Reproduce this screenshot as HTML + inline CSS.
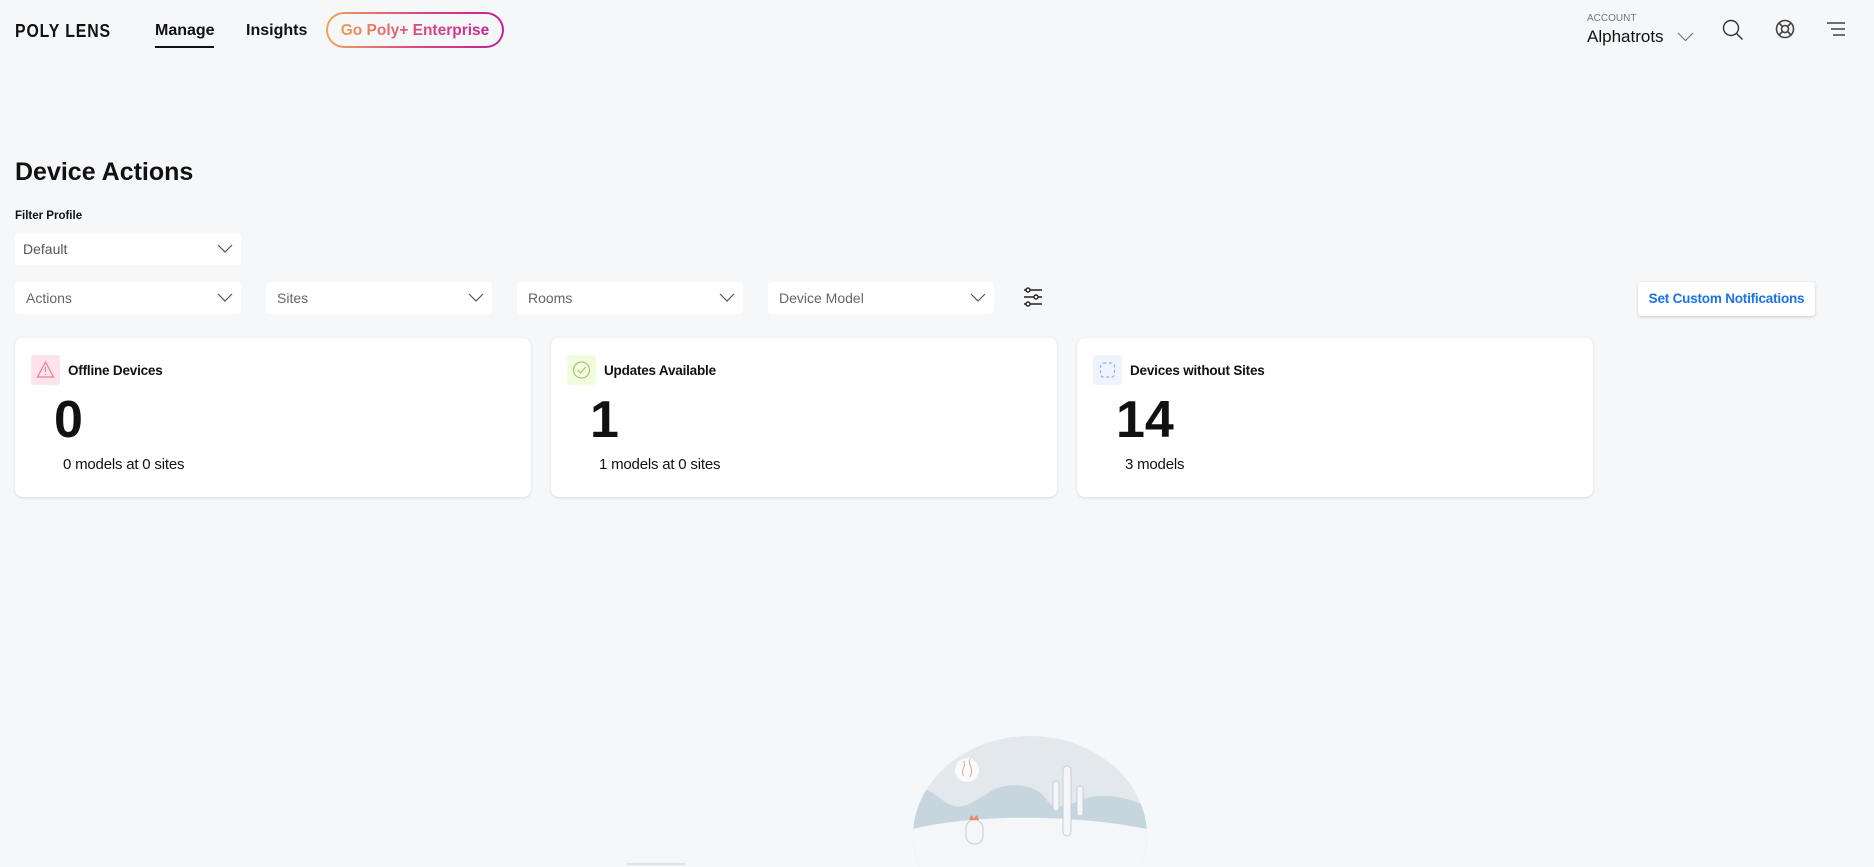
<!DOCTYPE html>
<html><head><meta charset="utf-8"><style>
*{box-sizing:border-box;margin:0;padding:0}
body{width:1874px;height:867px;background:#f6f7f9;font-family:"Liberation Sans",sans-serif;color:#111;position:relative;overflow:hidden}
.a{position:absolute}
.logo{left:15px;top:21px;font-size:18px;letter-spacing:1px;font-weight:bold;color:#111;transform:scaleX(.88);transform-origin:left}
.nav{top:22px;font-size:16px;font-weight:bold}
.btn{left:326px;top:12px;width:178px;height:36px;border-radius:18px;border:2px solid transparent;background:linear-gradient(#f6f7f9,#f6f7f9) padding-box,linear-gradient(90deg,#f3a45a,#d94b7c,#c2209a) border-box;text-align:center;line-height:33px;font-size:15.5px;font-weight:bold}
.btn span{background:linear-gradient(90deg,#ef9a55,#d9507a,#c4259a);-webkit-background-clip:text;color:transparent}
.sel{background:#fff;border-radius:4px;height:32px;width:226px;font-size:14px;color:#666;padding-left:11px;line-height:32px}
.sel svg{position:absolute;right:8px;top:11px}
.card{background:#fff;border-radius:8px;top:338px;height:159px;box-shadow:0 1px 3px rgba(0,0,0,.12)}
.ic{position:absolute;left:16px;top:17px;width:29px;height:30px;border-radius:3px}
.ct{position:absolute;left:53px;top:25px;font-size:13.5px;font-weight:bold;letter-spacing:-.2px}
.num{position:absolute;left:39px;top:52px;font-size:52px;font-weight:bold}
.sub{position:absolute;left:48px;top:118px;font-size:15px;letter-spacing:-.2px}
</style></head><body>
<div class="a logo">POLY LENS</div>
<div class="a nav" style="left:155px">Manage</div>
<div class="a" style="left:155px;top:46px;width:59px;height:2px;background:#111"></div>
<div class="a nav" style="left:246px">Insights</div>
<div class="a btn"><span>Go Poly+ Enterprise</span></div>
<div class="a" style="left:1587px;top:13px;font-size:10px;color:#777">ACCOUNT</div>
<div class="a" style="left:1587px;top:27px;font-size:17px">Alphatrots</div>
<svg class="a" style="left:1677px;top:32px" width="17" height="10"><path d="M1 1l7.5 7.5L16 1" fill="none" stroke="#777" stroke-width="1.2"/></svg>
<svg class="a" style="left:1722px;top:19px" width="22" height="22"><circle cx="9" cy="9" r="7.5" fill="none" stroke="#333" stroke-width="1.4"/><path d="M14.5 14.5l6 6" stroke="#333" stroke-width="1.4"/></svg>
<svg class="a" style="left:1775px;top:19px" width="20" height="20"><circle cx="10" cy="10" r="8.5" fill="none" stroke="#444" stroke-width="1.6"/><circle cx="10" cy="10" r="3.5" fill="none" stroke="#444" stroke-width="1.6"/><path d="M4 4l3.5 3.5M16 4l-3.5 3.5M4 16l3.5-3.5M16 16l-3.5-3.5" stroke="#444" stroke-width="1.6"/></svg>
<svg class="a" style="left:1827px;top:22px" width="20" height="14"><path d="M0 1h18M4 7h14M6 13h12" stroke="#444" stroke-width="1.5"/></svg>

<div class="a" style="left:15px;top:158px;font-size:25px;font-weight:bold">Device Actions</div>
<div class="a" style="left:15px;top:210px;font-size:11.5px;font-weight:bold">Filter Profile</div>
<div class="a sel" style="left:15px;top:233px;color:#555;font-size:14px;padding-left:8px">Default<svg width="16" height="10"><path d="M1 1l7 7 7-7" fill="none" stroke="#555" stroke-width="1.2"/></svg></div>
<div class="a sel" style="left:15px;top:282px">Actions<svg width="16" height="10"><path d="M1 1l7 7 7-7" fill="none" stroke="#555" stroke-width="1.2"/></svg></div>
<div class="a sel" style="left:266px;top:282px">Sites<svg width="16" height="10"><path d="M1 1l7 7 7-7" fill="none" stroke="#555" stroke-width="1.2"/></svg></div>
<div class="a sel" style="left:517px;top:282px">Rooms<svg width="16" height="10"><path d="M1 1l7 7 7-7" fill="none" stroke="#555" stroke-width="1.2"/></svg></div>
<div class="a sel" style="left:768px;top:282px">Device Model<svg width="16" height="10"><path d="M1 1l7 7 7-7" fill="none" stroke="#555" stroke-width="1.2"/></svg></div>
<svg class="a" style="left:1023px;top:287px" width="20" height="20"><g stroke="#222" stroke-width="1.4" fill="#fff"><path d="M1 3h18M1 10h18M1 17h18"/><circle cx="5" cy="3" r="2"/><circle cx="13" cy="10" r="2"/><circle cx="5" cy="17" r="2"/></g></svg>
<div class="a" style="left:1638px;top:282px;width:177px;height:34px;background:#fff;border-radius:3px;box-shadow:0 1px 3px rgba(0,0,0,.18);color:#1a73e8;font-weight:bold;font-size:13.5px;line-height:34px;text-align:center;letter-spacing:-.2px">Set Custom Notifications</div>

<div class="a card" style="left:15px;width:516px">
 <div class="ic" style="background:#fde4ea"><svg width="29" height="30"><path d="M14.5 7l8 15h-16z" fill="none" stroke="#f07b98" stroke-width="1.2"/><path d="M14.5 12v5M14.5 19v1" stroke="#f07b98" stroke-width="1.2"/></svg></div>
 <div class="ct">Offline Devices</div><div class="num">0</div><div class="sub">0 models at 0 sites</div></div>
<div class="a card" style="left:551px;width:506px">
 <div class="ic" style="background:#f1fbe0"><svg width="29" height="30"><circle cx="14.5" cy="15" r="8" fill="none" stroke="#a8c46a" stroke-width="1.2"/><path d="M10.5 15l3 3 5-6" fill="none" stroke="#a8c46a" stroke-width="1.2"/></svg></div>
 <div class="ct">Updates Available</div><div class="num">1</div><div class="sub">1 models at 0 sites</div></div>
<div class="a card" style="left:1077px;width:516px">
 <div class="ic" style="background:#eef3fe"><svg width="29" height="30"><rect x="7.5" y="8" width="14" height="14" rx="3" fill="none" stroke="#8fb0ee" stroke-width="1.2" stroke-dasharray="3 2.5"/></svg></div>
 <div class="ct">Devices without Sites</div><div class="num">14</div><div class="sub">3 models</div></div>

<svg class="a" style="left:913px;top:736px" width="234" height="131">
 <defs><clipPath id="c"><ellipse cx="117" cy="100" rx="117" ry="100"/></clipPath></defs>
 <g clip-path="url(#c)">
 <rect width="234" height="131" fill="#e3e8ec"/>
 <path d="M0 55c20-10 30 20 50 15s30-25 60-20 20 25 40 20 20-10 40-10 30 5 44 10v60H0z" fill="#c7d5df"/>
 <path d="M0 93c60-15 160-15 234 0v40H0z" fill="#f4f6f8"/>
 </g>
 <circle cx="54" cy="34" r="12" fill="#fbfbfb"/>
 <path d="M50 25c5 5-4 9 1 15M57 23c-3 5 5 10 0 18" stroke="#e8a590" fill="none"/>
 <rect x="150" y="30" width="8" height="70" rx="4" fill="#f4f6f8" stroke="#c7ced4"/>
 <rect x="140" y="45" width="6" height="30" rx="3" fill="#f4f6f8" stroke="#c7ced4"/>
 <rect x="164" y="50" width="6" height="30" rx="3" fill="#f4f6f8" stroke="#c7ced4"/>
 <rect x="53" y="84" width="17" height="24" rx="8" fill="#f4f6f8" stroke="#c7ced4"/>
 <path d="M56 84l2-5 3 3 3-3 2 5z" fill="#ec8a68"/>
</svg>
<div class="a" style="left:627px;top:863px;width:58px;height:2px;background:#dde0e4"></div>
</body></html>
